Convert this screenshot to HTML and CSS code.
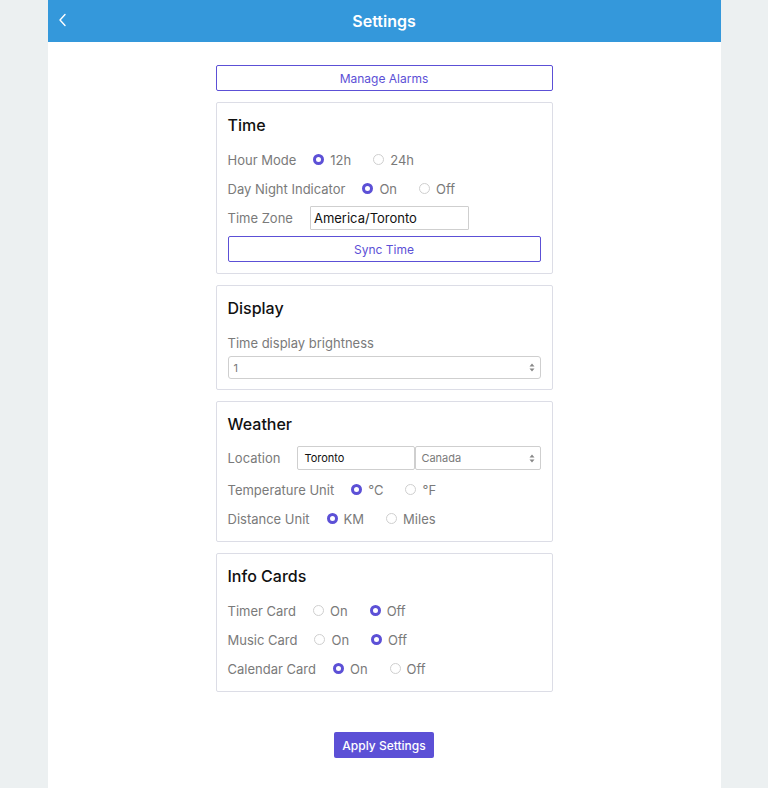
FILE: index.html
```html
<!DOCTYPE html>
<html lang="en">
<head>
    <meta charset="UTF-8">
    <meta name="viewport" content="width=device-width, initial-scale=1.0">
    <title>Settings</title>
    <link rel="stylesheet" href="styles.css">
</head>
<body>
    <div class="app">
        <header class="topbar">
            <a href="#" class="back">
                <svg width="10" height="14" viewBox="0 0 10 14"><path d="M7 1.5 L2 7 L7 12.5" fill="none" stroke="#fff" stroke-width="1.4" stroke-linecap="round" stroke-linejoin="round"/></svg>
            </a>
            <h1>Settings</h1>
        </header>

        <main class="settings">
            <button class="btn-outline alarms">Manage Alarms</button>

            <section class="card">
                <h2>Time</h2>
                <div class="row">
                    <span class="label">Hour Mode</span>
                    <span class="opt"><i class="radio checked"></i>12h</span>
                    <span class="opt"><i class="radio"></i>24h</span>
                </div>
                <div class="row">
                    <span class="label">Day Night Indicator</span>
                    <span class="opt"><i class="radio checked"></i>On</span>
                    <span class="opt"><i class="radio"></i>Off</span>
                </div>
                <div class="row field-row tz">
                    <span class="label">Time Zone</span>
                    <input class="text-input tz-input" type="text" value="America/Toronto">
                </div>
                <button class="btn-outline sync">Sync Time</button>
            </section>

            <section class="card">
                <h2>Display</h2>
                <div class="label block-label">Time display brightness</div>
                <div class="select full">
                    <span>1</span>
                    <svg width="6" height="9" viewBox="0 0 6 9"><path d="M3 0.5 L5.5 3.5 H0.5 Z M3 8.5 L5.5 5.5 H0.5 Z" fill="#888"/></svg>
                </div>
            </section>

            <section class="card">
                <h2>Weather</h2>
                <div class="row field-row loc">
                    <span class="label">Location</span>
                    <input class="text-input city" type="text" value="Toronto">
                    <div class="select country">
                        <span>Canada</span>
                        <svg width="6" height="9" viewBox="0 0 6 9"><path d="M3 0.5 L5.5 3.5 H0.5 Z M3 8.5 L5.5 5.5 H0.5 Z" fill="#888"/></svg>
                    </div>
                </div>
                <div class="row">
                    <span class="label">Temperature Unit</span>
                    <span class="opt"><i class="radio checked"></i>°C</span>
                    <span class="opt"><i class="radio"></i>°F</span>
                </div>
                <div class="row">
                    <span class="label">Distance Unit</span>
                    <span class="opt"><i class="radio checked"></i>KM</span>
                    <span class="opt"><i class="radio"></i>Miles</span>
                </div>
            </section>

            <section class="card">
                <h2>Info Cards</h2>
                <div class="row">
                    <span class="label">Timer Card</span>
                    <span class="opt"><i class="radio"></i>On</span>
                    <span class="opt"><i class="radio checked"></i>Off</span>
                </div>
                <div class="row">
                    <span class="label">Music Card</span>
                    <span class="opt"><i class="radio"></i>On</span>
                    <span class="opt"><i class="radio checked"></i>Off</span>
                </div>
                <div class="row">
                    <span class="label">Calendar Card</span>
                    <span class="opt"><i class="radio checked"></i>On</span>
                    <span class="opt"><i class="radio"></i>Off</span>
                </div>
            </section>

            <button class="btn-primary">Apply Settings</button>
        </main>
    </div>
</body>
</html>
```

FILE: styles.css
```css
body {
    margin: 0;
    padding: 0;
    background: #ecf0f1;
    font-family: 'Inter', 'Liberation Sans', sans-serif;
    overflow: hidden;
}

.app {
    width: 673px;
    margin: 0 auto;
    min-height: 100vh;
    background: #fff;
}

.topbar {
    position: relative;
    height: 42px;
    background: #3498db;
    display: flex;
    align-items: center;
    justify-content: center;
}

.topbar h1 {
    margin: 0;
    color: #fff;
    font-size: 16px;
    font-weight: 600;
}

.back {
    position: absolute;
    left: 10px;
    top: 13px;
    display: block;
    line-height: 0;
}

.settings {
    width: 337px;
    margin: 0 auto;
    padding-top: 23px;
    display: flex;
    flex-direction: column;
    gap: 11px;
}

.btn-outline {
    display: block;
    width: 100%;
    height: 26px;
    background: #fff;
    border: 1px solid #5c50d6;
    border-radius: 2px;
    color: #5c50d6;
    font-family: inherit;
    font-size: 12px;
    padding: 0;
}

.card {
    border: 1px solid #dcdde6;
    border-radius: 2px;
    padding: 10px 11px 8px;
}

.card h2 {
    margin: 0 0 8px;
    font-size: 16px;
    font-weight: 500;
    line-height: 24px;
    color: #111;
}

.label {
    color: #7a7a7a;
    font-size: 13px;
    margin-right: 17px;
}

.row {
    display: flex;
    align-items: center;
    height: 29px;
}

.opt {
    display: inline-flex;
    align-items: center;
    color: #7a7a7a;
    font-size: 13px;
    margin-right: 22px;
}

.radio {
    display: inline-block;
    box-sizing: border-box;
    width: 11px;
    height: 11px;
    border-radius: 50%;
    border: 1px solid #cfcfcf;
    background: #fff;
    margin-right: 6px;
}

.radio.checked {
    border: 3px solid #5c50d6;
}

.field-row {
    height: 24px;
}

.tz {
    margin: 3px 0 0;
}

.text-input {
    box-sizing: border-box;
    height: 24px;
    border: 1px solid #cfcfcf;
    border-radius: 1px;
    font-family: inherit;
    color: #111;
    padding: 0 3px;
    margin: 0;
    outline: none;
}

.tz-input {
    width: 159px;
    font-size: 13px;
}

.sync {
    margin: 6px 0 3px;
}

.block-label {
    margin: 14px 0 4px;
    line-height: 18px;
}

.select {
    box-sizing: border-box;
    height: 23px;
    border: 1px solid #cfcfcf;
    border-radius: 3px;
    display: flex;
    align-items: center;
    justify-content: space-between;
    padding: 0 5px 0 5px;
    color: #7a7a7a;
    font-size: 11px;
}

.full {
    margin-bottom: 2px;
}

.loc {
    margin: 10px 0 5px;
}

.city {
    width: 118px;
    font-size: 11px;
    padding: 0 6px;
    border-radius: 2px;
}

.country {
    width: 126px;
    height: 24px;
    border-radius: 2px;
}

.btn-primary {
    align-self: center;
    margin-top: 29px;
    width: 100px;
    height: 26px;
    background: #5c50d6;
    border: none;
    border-radius: 2px;
    color: #fff;
    font-family: inherit;
    font-size: 12px;
    font-weight: 500;
    padding: 0;
}
```
